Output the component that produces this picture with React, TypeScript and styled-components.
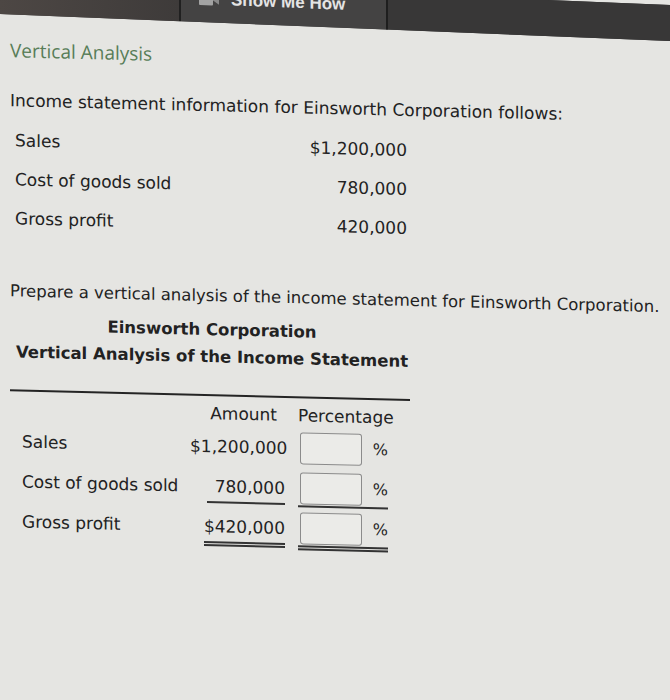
import React from "react";
import styled, { createGlobalStyle } from "styled-components";

const Global = createGlobalStyle`
  html, body { margin: 0; padding: 0; background: #e5e5e2; overflow: hidden; }
  body { width: 670px; height: 700px; }
`;

const Page = styled.div`
  width: 670px;
  height: 700px;
  transform: skewY(1.4deg);
  transform-origin: 0 0;
  font-family: "DejaVu Sans", Verdana, sans-serif;
  font-size: 17px;
  color: #222;
`;

const TopBar = styled.div`
  margin-top: -22px;
  height: 36px;
  width: 700px;
  display: flex;
  background: #383737;
  transform: skewY(0.9deg);
  transform-origin: 0 0;
  font-family: "Liberation Sans", Arial, sans-serif;
`;

const BarLeft = styled.div`
  width: 179px;
  background: linear-gradient(90deg, #4d4744, #3e3b3a);
  border-right: 2px solid #202020;
`;

const Tab = styled.div`
  width: 207px;
  box-sizing: border-box;
  display: flex;
  align-items: flex-start;
  gap: 12px;
  padding: 3px 0 0 18px;
  background: #444343;
  border-right: 2px solid #1e1e1e;
  color: #e4e4e4;
  font-weight: bold;
  font-size: 17px;
  line-height: 20px;
`;

const BarRest = styled.div`
  flex: 1;
  background: #383737;
`;

const Content = styled.div`
  padding-left: 10px;
`;

const Heading = styled.h2`
  margin: 24px 0 0;
  font: 400 19px/24px "Open Sans", "DejaVu Sans", sans-serif;
  color: #587d58;
`;

const Para = styled.p<{ $top: number; $size?: number }>`
  margin: ${(p) => p.$top}px 0 0;
  font-size: ${(p) => p.$size ?? 17}px;
  line-height: 24px;
  white-space: nowrap;
`;

const DataList = styled.div`
  margin-top: 8px;
  width: 397px;
`;

const DataRow = styled.div`
  height: 39px;
  display: flex;
  align-items: center;
  justify-content: space-between;
  padding-left: 5px;
`;

const Title = styled.div`
  margin-top: 8px;
  width: 404px;
  text-align: center;
  font-weight: bold;
  font-size: 16.5px;
  line-height: 27px;
`;

const Statement = styled.div`
  margin-top: 24px;
  width: 400px;
  border-top: 2px solid #242424;
`;

const HeadRow = styled.div`
  height: 30px;
  padding: 3px 0 0 12px;
  box-sizing: border-box;
  display: grid;
  grid-template-columns: 155px 95px 90px;
  column-gap: 13px;
  align-items: center;
  line-height: 22px;
`;

const HeadAmount = styled.div`
  grid-column: 2;
  text-align: right;
  padding-right: 8px;
`;

const HeadPct = styled.div`
  grid-column: 3;
  text-align: center;
  white-space: nowrap;
`;

const Row = styled.div`
  height: 40px;
  padding-left: 12px;
  display: grid;
  grid-template-columns: 155px 95px 90px;
  column-gap: 13px;
  align-items: start;
  line-height: 22px;
`;

const Label = styled.div`
  padding-top: 9px;
  white-space: nowrap;
`;

const AmountCell = styled.div`
  display: flex;
  justify-content: flex-end;
`;

type Rule = "none" | "single" | "double";

const ruleCss = (r: Rule) =>
  r === "single" ? "2px solid #333" : r === "double" ? "5px double #333" : "none";

const Figure = styled.span<{ $rule: Rule }>`
  display: inline-block;
  min-width: 78px;
  text-align: right;
  padding: 9px 0 4px;
  white-space: nowrap;
  border-bottom: ${(p) => ruleCss(p.$rule)};
`;

const PctCell = styled.div<{ $rule: Rule }>`
  display: flex;
  align-items: center;
  justify-content: space-between;
  padding: 4px 0 1px 2px;
  border-bottom: ${(p) => ruleCss(p.$rule)};
`;

const PctInput = styled.input`
  width: 62px;
  height: 32px;
  box-sizing: border-box;
  border: 1.5px solid #8b8b8b;
  border-radius: 3px;
  background: #ebebe8;
  outline: none;
`;

const PctSign = styled.span`
  font-size: 16px;
`;

const CamIcon = () => (
  <svg width="20" height="18" viewBox="0 0 20 18" aria-hidden="true">
    <rect x="0" y="2" width="14" height="14" rx="1" fill="#a3a3a3" />
    <path d="M14 7 L20 3 L20 15 L14 11 Z" fill="#8a8a8a" />
  </svg>
);

const rows: { label: string; amount: string; amountRule: Rule; pctRule: Rule }[] = [
  { label: "Sales", amount: "$1,200,000", amountRule: "none", pctRule: "none" },
  { label: "Cost of goods sold", amount: "780,000", amountRule: "single", pctRule: "single" },
  { label: "Gross profit", amount: "$420,000", amountRule: "double", pctRule: "double" },
];

const info: [string, string][] = [
  ["Sales", "$1,200,000"],
  ["Cost of goods sold", "780,000"],
  ["Gross profit", "420,000"],
];

export default function App() {
  return (
    <>
      <Global />
      <Page>
        <TopBar>
          <BarLeft />
          <Tab>
            <CamIcon />
            <span>Show Me How</span>
          </Tab>
          <BarRest />
        </TopBar>
        <Content>
          <Heading>Vertical Analysis</Heading>
          <Para $top={26}>Income statement information for Einsworth Corporation follows:</Para>
          <DataList>
            {info.map(([l, v]) => (
              <DataRow key={l}>
                <span>{l}</span>
                <span>{v}</span>
              </DataRow>
            ))}
          </DataList>
          <Para $top={42} $size={16.5}>
            Prepare a vertical analysis of the income statement for Einsworth Corporation.
          </Para>
          <Title>
            <div>Einsworth Corporation</div>
            <div>Vertical Analysis of the Income Statement</div>
          </Title>
          <Statement>
            <HeadRow>
              <HeadAmount>Amount</HeadAmount>
              <HeadPct>Percentage</HeadPct>
            </HeadRow>
            {rows.map((r) => (
              <Row key={r.label}>
                <Label>{r.label}</Label>
                <AmountCell>
                  <Figure $rule={r.amountRule}>{r.amount}</Figure>
                </AmountCell>
                <PctCell $rule={r.pctRule}>
                  <PctInput type="text" aria-label={`${r.label} percentage`} />
                  <PctSign>%</PctSign>
                </PctCell>
              </Row>
            ))}
          </Statement>
        </Content>
      </Page>
    </>
  );
}
